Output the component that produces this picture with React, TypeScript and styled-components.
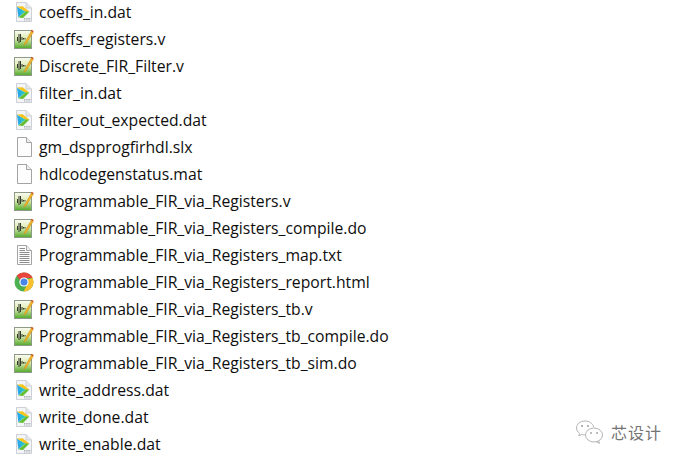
import styled, { createGlobalStyle } from "styled-components";

const GlobalStyle = createGlobalStyle`
  html, body {
    margin: 0;
    padding: 0;
    background: #fff;
  }
`;

const Page = styled.div`
  position: relative;
  width: 683px;
  height: 463px;
  overflow: hidden;
  background: #fff;
`;

const FileList = styled.ul`
  display: flex;
  flex-direction: column;
  gap: 4px;
  margin: 0;
  padding: 0 0 0 14px;
  list-style: none;
`;

const FileRow = styled.li`
  display: flex;
  align-items: center;
  gap: 5px;
  height: 23px;
`;

const IconBox = styled.span`
  display: flex;
  flex: none;
  width: 20px;
  height: 20px;
`;

const FileName = styled.span`
  font-family: "Open Sans", "Noto Sans", sans-serif;
  font-size: 15.72px;
  color: #0e0e0e;
  white-space: nowrap;
`;

const Watermark = styled.div`
  position: absolute;
  right: 21px;
  bottom: 19px;
  display: flex;
  align-items: center;
  gap: 6px;
`;

const WatermarkText = styled.span`
  font-family: "Noto Sans CJK SC", sans-serif;
  font-size: 16px;
  color: #737373;
  letter-spacing: 1px;
`;

const Sheet = () => (
  <path d="M3.5 .5H12.5L17.5 5.5V19.5H3.5Z" fill="#fdfdfd" stroke="#a4a4a4" />
);

const MediaIcon = () => (
  <svg width="20" height="20" viewBox="0 0 20 20">
    <path d="M2.5 .5H12L17.5 6V19.5H2.5Z" fill="#f3f5f8" stroke="#cdd1d6" />
    <path d="M12 .5V6H17.5" fill="#e4e7ea" stroke="#cdd1d6" />
    <path d="M3 4.6L8 8L8 12L4.4 15.6Z" fill="#2aa9e6" />
    <path d="M3 4.6L8.6 4.2L15.4 9.6L11.6 10Z" fill="#f7c41f" />
    <path d="M4.4 15.6L11.6 9.6H15.4L9 15.9Z" fill="#63bf35" />
    <path d="M6.6 7L11.6 9.8L6.8 12.8Z" fill="#25c2c9" />
    <path d="M10 16.5H17M10 18H17" stroke="#a7adb3" strokeWidth="1" strokeDasharray="1.4 .8" />
  </svg>
);

const VerilogIcon = () => (
  <svg width="20" height="20" viewBox="0 0 20 20">
    <defs>
      <linearGradient id="sheetGreen" x1="0" y1="0" x2="0" y2="1">
        <stop offset="0" stopColor="#fafbf4" />
        <stop offset="0.45" stopColor="#dcebb0" />
        <stop offset="1" stopColor="#4fa82a" />
      </linearGradient>
    </defs>
    <rect x=".5" y="1.5" width="17" height="18" fill="url(#sheetGreen)" stroke="#8d9a86" />
    <path
      d="M3.5 8V12M5 5V14M6.5 5V13M8 8V11M9.5 9V10.5M11 9V10.5"
      stroke="#33382f"
      strokeWidth="1"
    />
    <path d="M17.6 1.6L11 13.5L9.6 16.4L12.2 14.6L19.4 3Z" fill="#f2b52c" stroke="#c78a18" strokeWidth=".5" />
    <path d="M17.7 .8L19.6 2L18.9 3.2L17 2Z" fill="#c7502f" />
  </svg>
);

const BlankIcon = () => (
  <svg width="20" height="20" viewBox="0 0 20 20">
    <Sheet />
    <path d="M12.5 .5V5.5H17.5" fill="#efefef" stroke="#a4a4a4" />
  </svg>
);

const TextIcon = () => (
  <svg width="20" height="20" viewBox="0 0 20 20">
    <Sheet />
    <path d="M12.5 .5V5.5H17.5" fill="#efefef" stroke="#a4a4a4" />
    <path
      d="M5.5 3.5H11M5.5 5.5H11M5.5 7.5H15.5M5.5 9.5H15.5M5.5 11.5H15.5M5.5 13.5H15.5M5.5 15.5H15.5M5.5 17.5H15.5"
      stroke="#8c8c8c"
    />
  </svg>
);

const ChromeIcon = () => (
  <svg width="20" height="20" viewBox="0 0 20 20">
    <circle cx="10" cy="10" r="9.5" fill="#4caf50" />
    <path d="M10 .5A9.5 9.5 0 0 1 18.6 6H10A4 4 0 0 0 6.3 8.6L2.8 3.8A9.5 9.5 0 0 1 10 .5Z" fill="#e8453c" />
    <path d="M18.6 6A9.5 9.5 0 0 1 9.5 19.5L13.3 12.3A4 4 0 0 0 13.4 7.6Z" fill="#fbc02d" />
    <circle cx="10" cy="10" r="4.6" fill="#fff" />
    <circle cx="10" cy="10" r="3.5" fill="#4a86e8" />
  </svg>
);

const icons = {
  media: MediaIcon,
  verilog: VerilogIcon,
  blank: BlankIcon,
  text: TextIcon,
  chrome: ChromeIcon,
};

const files: { name: string; icon: keyof typeof icons }[] = [
  { name: "coeffs_in.dat", icon: "media" },
  { name: "coeffs_registers.v", icon: "verilog" },
  { name: "Discrete_FIR_Filter.v", icon: "verilog" },
  { name: "filter_in.dat", icon: "media" },
  { name: "filter_out_expected.dat", icon: "media" },
  { name: "gm_dspprogfirhdl.slx", icon: "blank" },
  { name: "hdlcodegenstatus.mat", icon: "blank" },
  { name: "Programmable_FIR_via_Registers.v", icon: "verilog" },
  { name: "Programmable_FIR_via_Registers_compile.do", icon: "verilog" },
  { name: "Programmable_FIR_via_Registers_map.txt", icon: "text" },
  { name: "Programmable_FIR_via_Registers_report.html", icon: "chrome" },
  { name: "Programmable_FIR_via_Registers_tb.v", icon: "verilog" },
  { name: "Programmable_FIR_via_Registers_tb_compile.do", icon: "verilog" },
  { name: "Programmable_FIR_via_Registers_tb_sim.do", icon: "verilog" },
  { name: "write_address.dat", icon: "media" },
  { name: "write_done.dat", icon: "media" },
  { name: "write_enable.dat", icon: "media" },
];

const WechatMark = () => (
  <svg width="30" height="24" viewBox="0 0 30 24" fill="none" stroke="#b4b4b4" strokeWidth="1">
    <path d="M10 1C5 1 1.5 4.2 1.5 8C1.5 10.2 2.7 12 4.5 13.3L3.8 15.8L6.6 14.4C7.6 14.7 8.6 14.9 9.8 14.9" />
    <path d="M10 1C14.4 1 18 3.6 18.7 7" />
    <ellipse cx="19" cy="15" rx="8.5" ry="7" />
    <path d="M23.6 21L24.6 23.4L21.6 22" />
    <circle cx="7" cy="6" r="1" fill="#9c9c9c" stroke="none" />
    <circle cx="13" cy="6" r="1" fill="#9c9c9c" stroke="none" />
    <circle cx="16" cy="13" r=".9" fill="#9c9c9c" stroke="none" />
    <circle cx="22" cy="13" r=".9" fill="#9c9c9c" stroke="none" />
  </svg>
);

export default function App() {
  return (
    <Page>
      <GlobalStyle />
      <FileList>
        {files.map((file) => {
          const Icon = icons[file.icon];
          return (
            <FileRow key={file.name}>
              <IconBox>
                <Icon />
              </IconBox>
              <FileName>{file.name}</FileName>
            </FileRow>
          );
        })}
      </FileList>
      <Watermark>
        <WechatMark />
        <WatermarkText>芯设计</WatermarkText>
      </Watermark>
    </Page>
  );
}
